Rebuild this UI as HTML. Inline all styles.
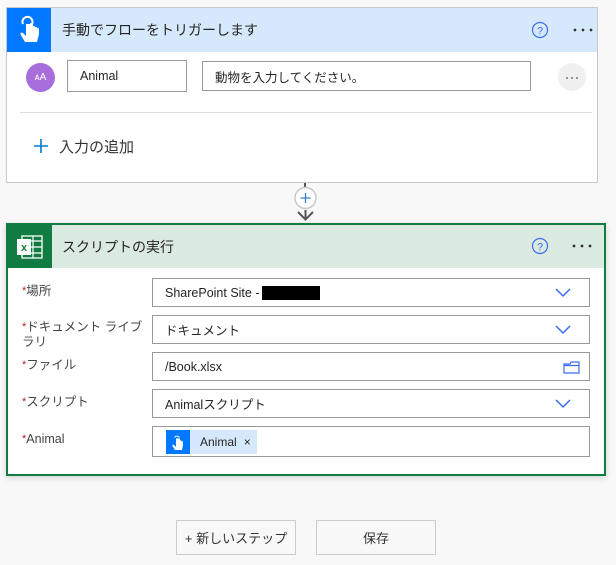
<!DOCTYPE html>
<html><head><meta charset="utf-8"><style>
*{box-sizing:border-box;margin:0;padding:0}
body{width:616px;height:565px;background:#f8f8f8;font-family:"Liberation Sans","Noto Sans CJK JP",sans-serif;color:#252423;position:relative;overflow:hidden}
.a{position:absolute}
.inp{position:absolute;border:1px solid #999;background:#fff;font-size:12.5px;padding-left:12px;display:flex;align-items:center}
.lab{position:absolute;left:22px;font-size:12.5px;color:#444;line-height:15px}
.lab b{color:#a4262c;font-weight:normal;font-size:11px;vertical-align:top}
.chev{position:absolute;right:18px;top:9px}
.btn{position:absolute;border:1px solid #ccc;background:#f8f8f8;font-size:13px;display:flex;align-items:center;justify-content:center;color:#333}
</style></head><body>
<!-- card 1 -->
<div class="a" style="left:6px;top:7px;width:592px;height:176px;background:#fff;border:1px solid #c8c8c8"></div>
<div class="a" style="left:7px;top:8px;width:590px;height:44px;background:#d6e9fc"></div>
<div class="a" style="left:7px;top:8px;width:44px;height:44px;background:#0078ff">
<svg width="44" height="44" viewBox="0 0 44 44"><path d="M19 16v12l-3-3c-1.5-1-3 0-2.5 1.5L18 34h12l2-8v-5c0-1.5-2-1.5-2 0v-1c0-1.5-2-1.5-2 0v-1c0-1.5-2-1.5-2 0v-3c0-1.5-3-1.5-3 0z" fill="#fff"/><path d="M16 16a5 5 0 1 1 9 0" fill="none" stroke="#fff" stroke-width="2"/></svg></div>
<div class="a" style="left:62px;top:20px;font-size:14px">手動でフローをトリガーします</div>
<svg class="a" style="left:531px;top:21px" width="18" height="18"><circle cx="9" cy="9" r="7.5" fill="none" stroke="#3b6cf0" stroke-width="1.2"/><text x="9" y="13.5" font-size="11" text-anchor="middle" fill="#3b6cf0" font-family="Liberation Sans">?</text></svg>
<svg class="a" style="left:572px;top:27px" width="22" height="6"><circle cx="3" cy="3" r="1.4" fill="#333"/><circle cx="11" cy="3" r="1.4" fill="#333"/><circle cx="19" cy="3" r="1.4" fill="#333"/></svg>
<div class="a" style="left:26px;top:63px;width:29px;height:29px;border-radius:50%;background:#a86edb;color:#fff;font-size:10px;display:flex;align-items:center;justify-content:center">ᴀA</div>
<div class="inp" style="left:67px;top:60px;width:120px;height:32px">Animal</div>
<div class="inp" style="left:202px;top:61px;width:329px;height:30px">動物を入力してください。</div>
<div class="a" style="left:558px;top:63px;width:28px;height:28px;border-radius:50%;background:#f0f0f0"></div>
<svg class="a" style="left:565px;top:76px" width="14" height="4"><circle cx="2" cy="2" r="1" fill="#777"/><circle cx="7" cy="2" r="1" fill="#777"/><circle cx="12" cy="2" r="1" fill="#777"/></svg>
<div class="a" style="left:20px;top:112px;width:572px;height:1px;background:#ddd"></div>
<svg class="a" style="left:34px;top:139px" width="14" height="14"><path d="M7 0v14M0 7h14" stroke="#0078d4" stroke-width="1.6"/></svg>
<div class="a" style="left:59px;top:136px;font-size:15px;color:#333">入力の追加</div>
<!-- connector -->
<div class="a" style="left:304px;top:183px;width:2px;height:6px;background:#555"></div>
<svg class="a" style="left:292px;top:186px" width="28" height="38"><circle cx="13.5" cy="12" r="10.5" fill="#fff" stroke="#c8c8c8" stroke-width="1.5"/><path d="M13.5 7v10M8.5 12h10" stroke="#3a7bd5" stroke-width="1.3"/><path d="M6 26l7.5 7.5L21 26M13.5 24v9" fill="none" stroke="#555" stroke-width="2"/></svg>
<!-- card 2 -->
<div class="a" style="left:6px;top:223px;width:600px;height:253px;background:#fff;border:2px solid #107c41;box-shadow:0 2px 6px rgba(0,0,0,.15)"></div>
<div class="a" style="left:8px;top:225px;width:596px;height:43px;background:#dbeae0"></div>
<div class="a" style="left:8px;top:225px;width:44px;height:43px;background:#107c41">
<svg width="44" height="43"><rect x="14" y="11" width="20" height="22" fill="none" stroke="#fff" stroke-width="1.3"/><path d="M22 16h12M22 22h12M22 28h12M25 11v22" stroke="#fff" stroke-width="1.2"/><rect x="9" y="14" width="14" height="16" fill="#fff"/><text x="16" y="26" font-size="11" font-weight="bold" text-anchor="middle" fill="#107c41" font-family="Liberation Sans">x</text></svg></div>
<div class="a" style="left:62px;top:237px;font-size:14px">スクリプトの実行</div>
<svg class="a" style="left:531px;top:237px" width="18" height="18"><circle cx="9" cy="9" r="7.5" fill="none" stroke="#3b6cf0" stroke-width="1.2"/><text x="9" y="13.5" font-size="11" text-anchor="middle" fill="#3b6cf0" font-family="Liberation Sans">?</text></svg>
<svg class="a" style="left:571px;top:243px" width="22" height="6"><circle cx="3" cy="3" r="1.4" fill="#333"/><circle cx="11" cy="3" r="1.4" fill="#333"/><circle cx="19" cy="3" r="1.4" fill="#333"/></svg>

<div class="lab" style="top:284px"><b>*</b>場所</div>
<div class="inp" style="left:152px;top:278px;width:438px;height:29px">SharePoint Site - <span style="display:inline-block;width:58px;height:14px;background:#000;margin-left:2px"></span>
<svg class="chev" width="16" height="10"><path d="M1 1l7 7 7-7" fill="none" stroke="#3b6cf0" stroke-width="1.5"/></svg></div>
<div class="lab" style="top:320px"><b>*</b>ドキュメント ライブ<br>ラリ</div>
<div class="inp" style="left:152px;top:315px;width:438px;height:29px">ドキュメント<svg class="chev" width="16" height="10"><path d="M1 1l7 7 7-7" fill="none" stroke="#3b6cf0" stroke-width="1.5"/></svg></div>
<div class="lab" style="top:358px"><b>*</b>ファイル</div>
<div class="inp" style="left:152px;top:352px;width:438px;height:29px">/Book.xlsx<svg class="a" style="right:9px;top:8px" width="17" height="13"><path d="M1 3h6l1-2h8v11H1z M1 4.5h15" fill="none" stroke="#3b6cf0" stroke-width="1.2"/></svg></div>
<div class="lab" style="top:395px"><b>*</b>スクリプト</div>
<div class="inp" style="left:152px;top:389px;width:438px;height:29px">Animalスクリプト<svg class="chev" width="16" height="10"><path d="M1 1l7 7 7-7" fill="none" stroke="#3b6cf0" stroke-width="1.5"/></svg></div>
<div class="lab" style="top:432px"><b>*</b>Animal</div>
<div class="inp" style="left:152px;top:426px;width:438px;height:31px;padding-left:13px">
<div style="display:flex;align-items:center;background:#d6e9fc;height:24px;width:91px">
<div style="width:24px;height:24px;background:#0078ff"><svg width="24" height="24"><path d="M10 9v8l-2-2c-1-1-2 0-1.5 1L9 20h7l1-5v-3c0-1-1.5-1-1.5 0v-1c0-1-1.5-1-1.5 0V9c0-1-1.5-1-1.5 0v0c0-1-2.5-1-2.5 0z" fill="#fff"/><path d="M8.5 7.5a3 3 0 0 1 5 0" fill="none" stroke="#fff"/></svg></div>
<span style="margin-left:10px;font-size:12px">Animal</span><span style="margin-left:7px;font-size:12px">×</span></div></div>
<!-- buttons -->
<div class="btn" style="left:176px;top:520px;width:120px;height:35px">+ 新しいステップ</div>
<div class="btn" style="left:316px;top:520px;width:120px;height:35px">保存</div>
</body></html>
